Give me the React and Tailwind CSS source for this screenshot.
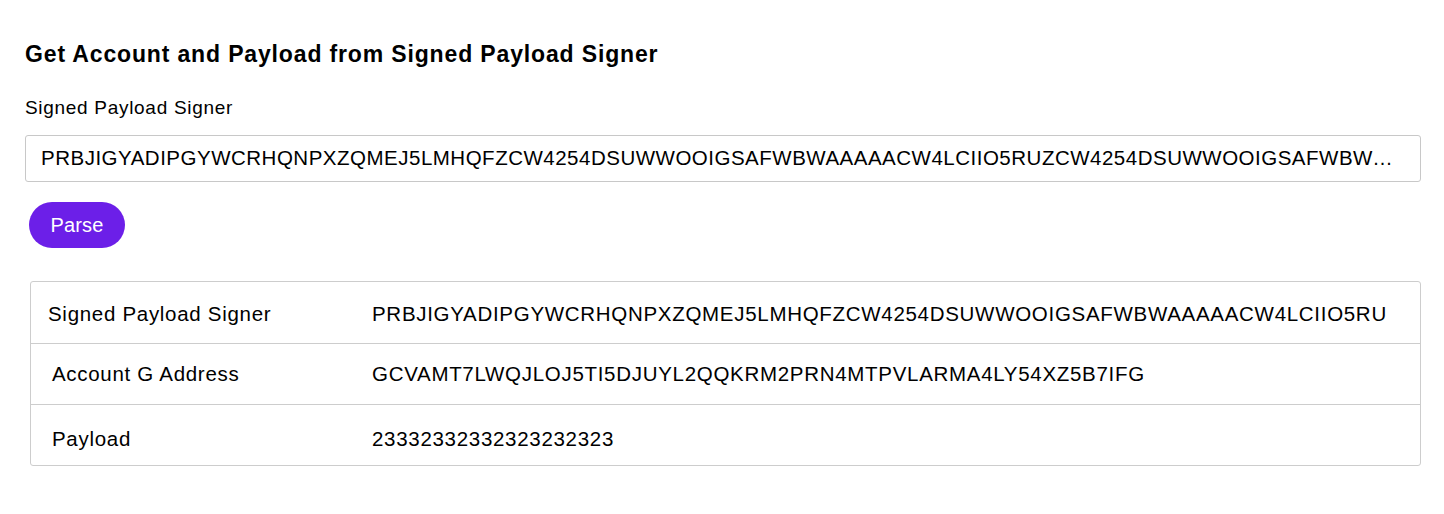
export default function App() {
  const rows = [
    ["Signed Payload Signer", "PRBJIGYADIPGYWCRHQNPXZQMEJ5LMHQFZCW4254DSUWWOOIGSAFWBWAAAAACW4LCIIO5RU", "pl-[17px] pt-[3px]"],
    ["Account G Address", "GCVAMT7LWQJLOJ5TI5DJUYL2QQKRM2PRN4MTPVLARMA4LY54XZ5B7IFG", "pl-[21px] pt-[1px]"],
    ["Payload", "23332332332323232323", "pl-[21px] pt-[8px]"],
  ];
  return (
    <div className="bg-white w-[1444px] h-[514px] px-[25px] pt-[39px] text-black" style={{ fontFamily: '"Liberation Sans", Arial, sans-serif' }}>
      <h1 className="text-[23px] font-bold leading-[30px] tracking-[0.85px]">
        Get Account and Payload from Signed Payload Signer
      </h1>
      <div className="mt-[27px] text-[19px] leading-[24px] tracking-[0.7px]">Signed Payload Signer</div>
      <div className="mt-[15px] w-[1396px] h-[47px] border border-[#c8c8c8] rounded-[3px] flex items-center pl-[15px] pr-[16px] text-[20.5px] tracking-[0.5px] overflow-hidden">
        <span className="truncate whitespace-nowrap block w-full">
          PRBJIGYADIPGYWCRHQNPXZQMEJ5LMHQFZCW4254DSUWWOOIGSAFWBWAAAAACW4LCIIO5RUZCW4254DSUWWOOIGSAFWBWAAAAACW4LCIIO5RU
        </span>
      </div>
      <button className="mt-[20px] ml-[4px] w-[96px] h-[46px] rounded-full bg-[#6c1fe8] text-white text-[20px] tracking-[0.2px] flex items-center justify-center">
        Parse
      </button>
      <div className="mt-[33px] ml-[5px] w-[1391px] border border-[#cdcdcd] rounded-[3px]">
        {rows.map(([k, v, pad], i) => (
          <div key={k} className={`flex items-center h-[61px] text-[20.5px] tracking-[0.7px] ${i > 0 ? "border-t border-[#cdcdcd]" : ""}`}>
            <div className={`w-[341px] shrink-0 ${pad}`}>{k}</div>
            <div className={pad.split(" ")[1]}>{v}</div>
          </div>
        ))}
      </div>
    </div>
  );
}
